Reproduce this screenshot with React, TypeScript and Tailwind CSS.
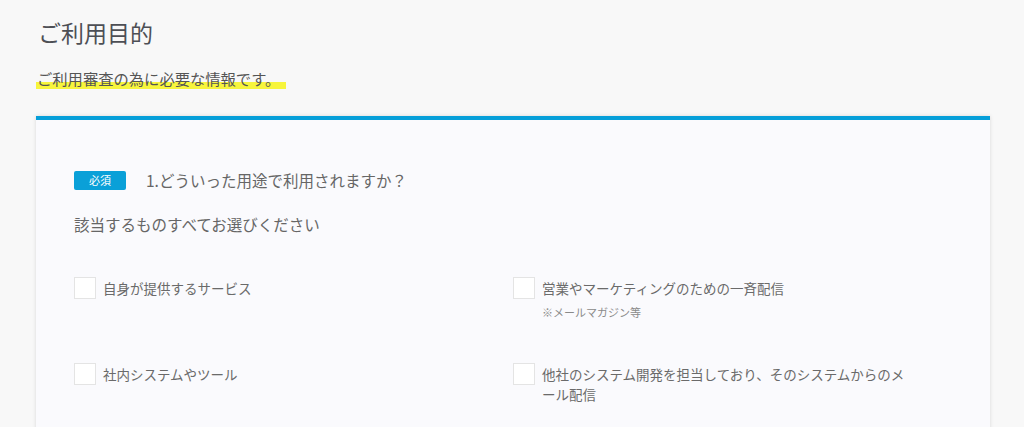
import React from "react";

const font = { fontFamily: '"Noto Sans CJK JP", "Noto Sans", sans-serif' };

function Item({ label, note }: { label: string; note?: string }) {
  return (
    <div className="flex items-start gap-[7px]">
      <div className="w-[22px] h-[22px] shrink-0 bg-white border border-[#e4e4e4]" />
      <div className="pt-[1px]">
        <div className="text-[13.5px] leading-[20px] text-[#6a6a6a] max-w-[372px]">{label}</div>
        {note && <div className="mt-[6px] text-[11px] leading-[16px] text-[#8a8a8a]">{note}</div>}
      </div>
    </div>
  );
}

export default function App() {
  return (
    <div className="w-[1024px] h-[427px] overflow-hidden bg-[#f8f8f8] pl-[36px] pr-[34px]" style={font}>
      <h1 className="pt-[16px] pl-[2px] text-[23px] leading-[32px] text-[#4d4f55] font-normal">ご利用目的</h1>
      <div className="mt-[18px]">
        <span className="inline-block h-[22px] leading-[22px] pl-[1px] pr-[6px] text-[15.3px] text-[#555] bg-[linear-gradient(transparent_68%,#f7f53c_68%)]">
          ご利用審査の為に必要な情報です。
        </span>
      </div>
      <div className="mt-[26px] bg-[#fafafd] border-t-4 border-[#069fd9] shadow-[0_0_4px_rgba(0,0,0,0.13)] px-[38px] pt-[51px] pb-[60px]">
        <div className="flex items-center gap-[20px] h-[19px]">
          <span className="w-[52px] h-[19px] rounded-[2px] bg-[#0aa0d8] text-white text-[11px] leading-[19px] text-center">必須</span>
          <span className="text-[15.5px] leading-[19px] text-[#666]">1.どういった用途で利用されますか？</span>
        </div>
        <div className="mt-[23px] text-[15.5px] leading-[22px] text-[#666]">該当するものすべてお選びください</div>
        <div className="mt-[42px] grid grid-cols-2 gap-y-[43px]">
          <Item label="自身が提供するサービス" />
          <Item label="営業やマーケティングのための一斉配信" note="※メールマガジン等" />
          <Item label="社内システムやツール" />
          <Item label="他社のシステム開発を担当しており、そのシステムからのメール配信" />
        </div>
      </div>
    </div>
  );
}
